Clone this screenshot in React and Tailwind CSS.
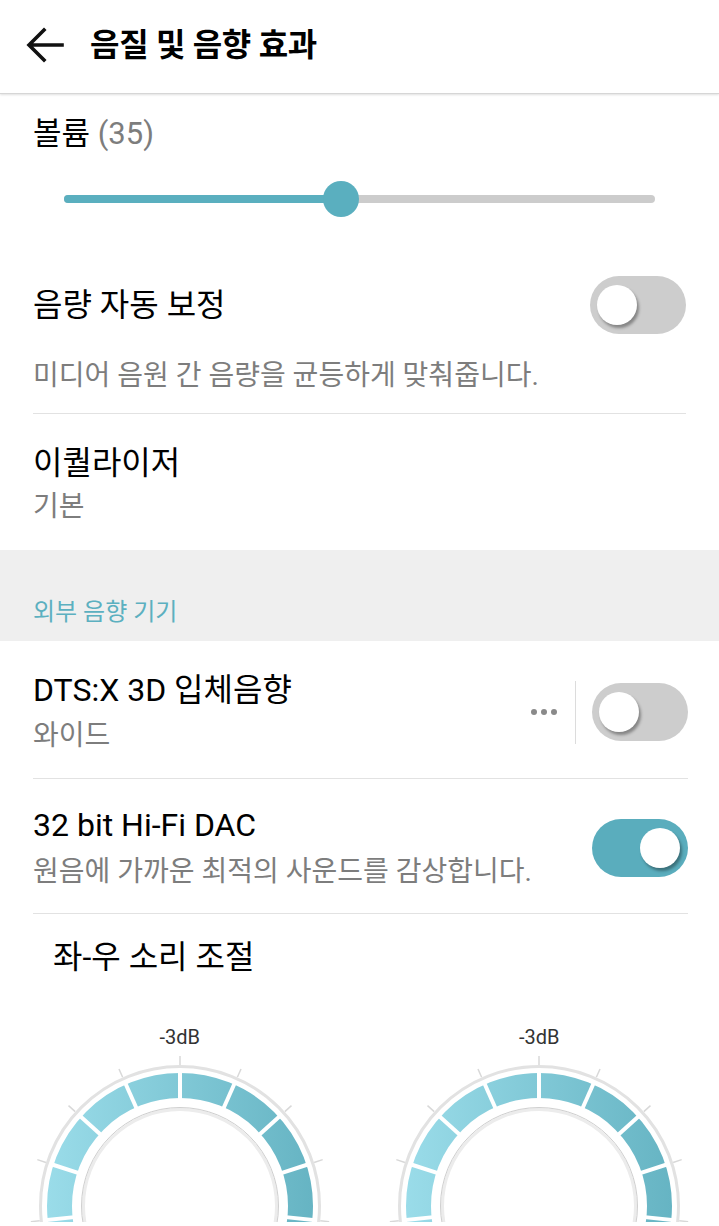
import { useState } from 'react'

const FONT = "font-['Roboto','Noto_Sans_CJK_KR',sans-serif]"

function Toggle({ on }) {
  return (
    <div
      className={`relative w-[96px] h-[58px] rounded-full shrink-0 ${
        on ? 'bg-[#5aadbd]' : 'bg-[#cdcdcd]'
      }`}
    >
      <div
        className={`absolute top-[9px] w-[40px] h-[40px] rounded-full bg-white shadow-[2px_3px_3px_rgba(0,0,0,0.35)] ${
          on ? 'right-[8px]' : 'left-[7px]'
        }`}
      />
    </div>
  )
}

function Divider() {
  return <div className="h-px bg-[#e2e2e2]" />
}

// 좌/우 다이얼: 15칸 세그먼트 링 + 바깥 눈금
function Dial({ id }) {
  const cx = 150
  const cy = 159
  const steps = Array.from({ length: 15 }, (_, i) => i * 24)
  const pt = (deg, r) => {
    const a = (deg * Math.PI) / 180
    return [cx + r * Math.sin(a), cy - r * Math.cos(a)]
  }
  return (
    <div className="flex flex-col items-center">
      <div className="text-[20px] leading-[20px] text-[#333]">-3dB</div>
      <svg width="300" height="175" viewBox="0 0 300 175">
        <defs>
          <linearGradient id={`g-${id}`} x1="17" y1="0" x2="283" y2="0" gradientUnits="userSpaceOnUse">
            <stop offset="0" stopColor="#9adce9" />
            <stop offset="1" stopColor="#66b4c3" />
          </linearGradient>
        </defs>
        {steps.map((d) => {
          const [x1, y1] = pt(d, 141)
          const [x2, y2] = pt(d, 150)
          return <line key={d} x1={x1} y1={y1} x2={x2} y2={y2} stroke="#d8d8d8" strokeWidth="1.5" />
        })}
        <circle cx={cx} cy={cy} r="139.5" fill="none" stroke="#e2e2e2" strokeWidth="3" />
        <circle cx={cx} cy={cy} r="120.5" fill="none" stroke={`url(#g-${id})`} strokeWidth="25" />
        {steps.map((d) => {
          const [x1, y1] = pt(d, 104)
          const [x2, y2] = pt(d, 136)
          return <line key={`s${d}`} x1={x1} y1={y1} x2={x2} y2={y2} stroke="#fff" strokeWidth="4" />
        })}
        <circle cx={cx} cy={cy} r="96.5" fill="white" stroke="#ececec" strokeWidth="3" />
        <circle cx={cx} cy={cy} r="98.5" fill="none" stroke="#cfcfcf" strokeWidth="1" />
      </svg>
    </div>
  )
}

export default function App() {
  const [volume] = useState(35)
  const pct = 46.9

  return (
    <div className={`${FONT} bg-white text-black w-[719px] h-[1226px] overflow-hidden`}>
      {/* 헤더 */}
      <header className="h-[94px] pb-[3px] flex items-center border-b border-[#d6d6d6] shadow-[0_1px_2px_rgba(0,0,0,0.12)]">
        <svg width="40" height="40" viewBox="0 0 40 40" className="ml-[25px]">
          <path d="M37 20H5M19 5 4 20l15 15" fill="none" stroke="#111" strokeWidth="3.6" strokeLinecap="square" />
        </svg>
        <h1 className="ml-[25px] text-[32px] font-bold leading-none tracking-[-0.3px]">음질 및 음향 효과</h1>
      </header>

      <div className="px-[33px]">
        {/* 볼륨 */}
        <div className="pt-[23px] text-[31px] leading-[34px]">
          볼륨 <span className="text-[#7d7d7d]">({volume})</span>
        </div>
        <div className="relative h-[36px] mt-[30px] mx-[31px] flex items-center">
          <div className="h-[8px] w-full rounded-full bg-[#cccccc]" />
          <div className="absolute left-0 h-[8px] rounded-l-full bg-[#5aafbf]" style={{ width: `${pct}%` }} />
          <div
            className="absolute top-0 w-[36px] h-[36px] -ml-[18px] rounded-full bg-[#5aafbf]"
            style={{ left: `${pct}%` }}
          />
        </div>

        {/* 음량 자동 보정 */}
        <div className="mt-[59px] flex items-center justify-between">
          <div className="text-[32px] leading-[34px]">음량 자동 보정</div>
          <Toggle on={false} />
        </div>
        <div className="mt-[25px] text-[28px] leading-[34px] text-[#7d7d7d]">
          미디어 음원 간 음량을 균등하게 맞춰줍니다.
        </div>
        <div className="mt-[20px]">
          <Divider />
        </div>

        {/* 이퀄라이저 */}
        <div className="pt-[32px] text-[32px] leading-[34px]">이퀄라이저</div>
        <div className="mt-[12px] pb-[28px] text-[28px] leading-[30px] text-[#7d7d7d]">기본</div>
      </div>

      {/* 외부 음향 기기 */}
      <div className="h-[91px] bg-[#efefef] px-[33px] pt-[47px]">
        <div className="text-[24px] leading-[30px] text-[#5cb0c0]">외부 음향 기기</div>
      </div>

      <div className="pr-[31px] pl-[33px]">
        {/* DTS:X */}
        <div className="flex items-center pt-[32px] pb-[27px]">
          <div className="flex-1">
            <div className="text-[32px] leading-[34px]">DTS:X 3D 입체음향</div>
            <div className="mt-[14px] text-[28px] leading-[30px] text-[#7d7d7d]">와이드</div>
          </div>
          <div className="flex items-center gap-[4px]">
            <span className="w-[6px] h-[6px] rounded-full bg-[#8a8a8a]" />
            <span className="w-[6px] h-[6px] rounded-full bg-[#8a8a8a]" />
            <span className="w-[6px] h-[6px] rounded-full bg-[#8a8a8a]" />
          </div>
          <div className="ml-[18px] mr-[16px] w-px h-[63px] bg-[#dcdcdc]" />
          <Toggle on={false} />
        </div>
        <Divider />

        {/* 32 bit Hi-Fi DAC */}
        <div className="flex items-center pt-[29px] pb-[26px]">
          <div className="flex-1">
            <div className="text-[32px] leading-[34px]">32 bit Hi-Fi DAC</div>
            <div className="mt-[15px] text-[28px] leading-[30px] text-[#7d7d7d]">
              원음에 가까운 최적의 사운드를 감상합니다.
            </div>
          </div>
          <Toggle on={true} />
        </div>
        <Divider />
      </div>

      {/* 좌-우 소리 조절 */}
      <div className="pl-[53px] pt-[26px] text-[32px] leading-[34px]">좌-우 소리 조절</div>
      <div className="mt-[53px] grid grid-cols-2">
        <Dial id="l" />
        <Dial id="r" />
      </div>
    </div>
  )
}
